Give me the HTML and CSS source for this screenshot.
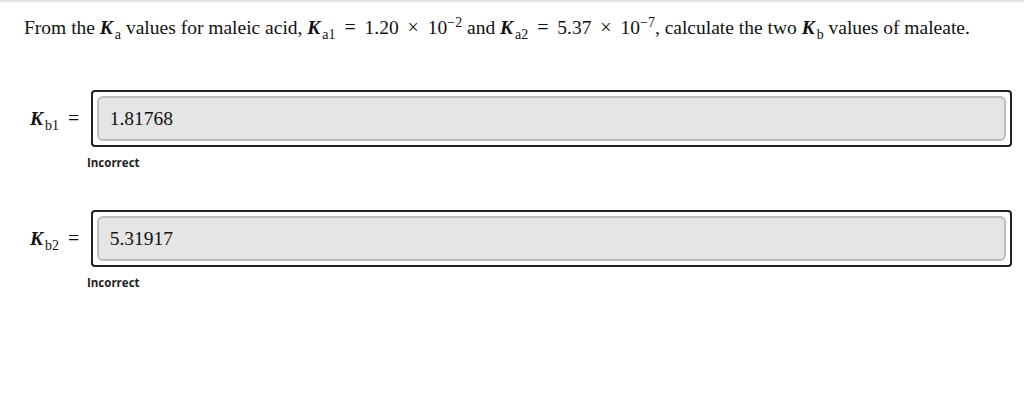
FILE: index.html
```html
<!DOCTYPE html>
<html lang="en">
  <head>
    <meta charset="UTF-8" />
    <title>Maleate Kb</title>
    <link rel="stylesheet" href="styles.css">
  </head>
  <body>
    <div class="question">
      <p class="prompt">
        From the <span class="k">K</span><sub>a</sub> values for maleic acid,
        <span class="k">K</span><sub>a1</sub> <span class="op">=</span> 1.20 <span class="op">&times;</span> 10<sup>&minus;2</sup>
        and <span class="k">K</span><sub>a2</sub> <span class="op">=</span> 5.37 <span class="op">&times;</span> 10<sup>&minus;7</sup>,
        calculate the two <span class="k">K</span><sub>b</sub> values of maleate.
      </p>

      <!-- answer rows -->
      <div class="answer">
        <div class="row">
          <label class="label" for="kb1"><span class="k">K</span><sub>b1</sub> <span class="op">=</span></label>
          <div class="frame">
            <input id="kb1" class="field" value="1.81768" readonly />
          </div>
        </div>
        <div class="feedback">Incorrect</div>
      </div>

      <div class="answer">
        <div class="row">
          <label class="label" for="kb2"><span class="k">K</span><sub>b2</sub> <span class="op">=</span></label>
          <div class="frame">
            <input id="kb2" class="field" value="5.31917" readonly />
          </div>
        </div>
        <div class="feedback">Incorrect</div>
      </div>
    </div>
  </body>
</html>
```

FILE: styles.css
```css
body {
  margin: 0;
  background: #fff;
  border-top: 2px solid #e4e4e4;
  font-family: "Liberation Serif", "Times New Roman", serif;
  color: #111;
}
.question {
  padding: 0 12px 0 24px;
}
.prompt {
  margin: 12px 0 0;
  font-size: 19.5px;
  line-height: 26px;
  white-space: nowrap;
}
.k {
  font-style: italic;
  font-weight: bold;
}
sub, sup {
  font-size: 14px;
  line-height: 0;
}
sub {
  margin-left: 2px;
}
.op {
  margin: 0 4px;
  font-size: 20px;
}
.answer {
  margin-top: 49px;
}
.answer + .answer {
  margin-top: 40px;
}
.row {
  display: flex;
  align-items: center;
}
.label {
  width: 61px;
  font-size: 19.5px;
  padding-left: 6px;
  white-space: nowrap;
}
.frame {
  width: 927px;
  height: 57px;
  border: 2px solid #222;
  border-radius: 4px;
  padding: 4px;
  box-sizing: border-box;
  margin: 0;
}
.field {
  width: 100%;
  height: 45px;
  box-sizing: border-box;
  margin: 0;
  padding: 0 11px;
  border: 2px solid #bdbdbd;
  border-radius: 6px;
  background: #e5e5e5;
  font-family: "Liberation Serif", "Times New Roman", serif;
  font-size: 19.5px;
  color: #111;
  outline: none;
}
.feedback {
  margin: 8px 0 0 63px;
  font-family: "Open Sans", sans-serif;
  font-weight: bold;
  font-size: 11.5px;
  color: #222;
}
```
